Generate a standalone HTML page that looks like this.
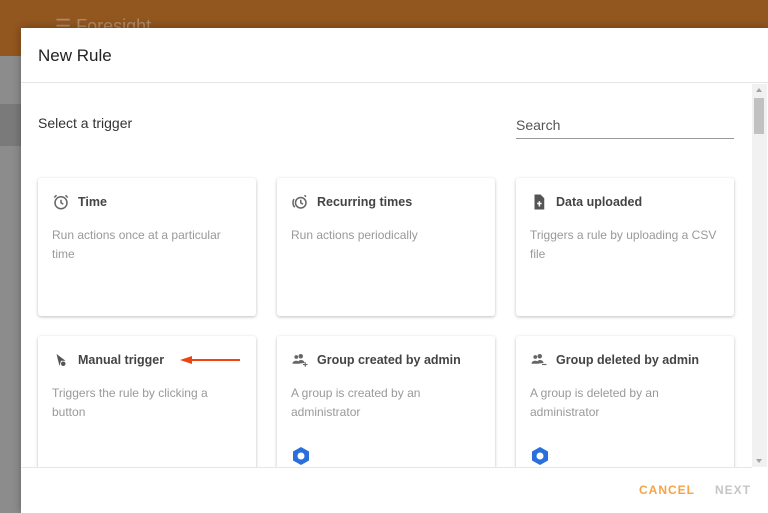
<!DOCTYPE html>
<html><head><style>
*{box-sizing:border-box;margin:0;padding:0}
body{width:768px;height:513px;overflow:hidden;font-family:"Liberation Sans",sans-serif;background:#8c8c8c;position:relative}
.top{position:absolute;left:0;top:0;width:768px;height:56px;background:#92561f}
.top .t{position:absolute;left:55px;top:16px;color:#b08a66;font-size:18px}
.side{position:absolute;left:0;top:104px;width:21px;height:42px;background:#7a7a7a}
.dlg{position:absolute;left:21px;top:28px;width:747px;height:485px;background:#fff;box-shadow:0 0 8px rgba(0,0,0,.3)}
.hd{height:55px;border-bottom:1px solid #e6e6e6;padding:18px 0 0 17px;font-size:17px;color:#222}
.sb{position:absolute;left:731px;top:56px;width:15px;height:383px;background:#f1f1f1}
.sb .th{position:absolute;left:2px;top:14px;width:10px;height:36px;background:#c1c1c1}
.sb .u{position:absolute;left:4px;top:4px;border:3.5px solid transparent;border-bottom:4px solid #a3a3a3;border-top:0}
.sb .d{position:absolute;left:4px;bottom:4px;border:3.5px solid transparent;border-top:4px solid #a3a3a3;border-bottom:0}
.sel{position:absolute;left:17px;top:87px;font-size:14px;color:#333}
.srch{position:absolute;left:495px;top:89px;width:218px;height:22px;border-bottom:1px solid #999;font-size:14px;color:#555}
.card{position:absolute;width:218px;height:138px;background:#fff;border-radius:3px;box-shadow:0 1px 3px rgba(0,0,0,.25)}
.card .h{position:absolute;left:14px;top:15px;font-size:12.5px;font-weight:bold;color:#444;display:flex;align-items:center}
.card .h svg{margin-right:8px}
.card .p{position:absolute;left:14px;top:48px;width:190px;font-size:12px;line-height:19px;color:#999}
.ft{position:absolute;left:0;top:439px;width:731px;height:46px;border-top:1px solid #e6e6e6;background:#fff}
.btn{position:absolute;top:15px;font-size:12px;font-weight:bold;letter-spacing:1px}
</style></head><body>
<div class="top"><div class="t">☰ Foresight</div></div>
<div class="side"></div>
<div class="dlg">
<div class="hd">New Rule</div>
<div class="sel">Select a trigger</div>
<div class="srch">Search</div>
<div class="card" style="left:17px;top:150px"><div class="h"><svg width="18" height="18" viewBox="0 0 24 24" fill="none" stroke="#666" stroke-width="2"><circle cx="12" cy="13" r="8"/><path d="M12 9v4l3 2M3 6l3-3M21 6l-3-3"/></svg>Time</div><div class="p">Run actions once at a particular time</div></div>
<div class="card" style="left:256px;top:150px"><div class="h"><svg width="18" height="18" viewBox="0 0 24 24" fill="none" stroke="#666" stroke-width="2"><circle cx="13" cy="13" r="7"/><path d="M13 9v4l3 2M4 8a9 9 0 0 0 1 11M20 5l-2-2"/></svg>Recurring times</div><div class="p">Run actions periodically</div></div>
<div class="card" style="left:495px;top:150px"><div class="h"><svg width="18" height="18" viewBox="0 0 24 24"><path d="M6 2h8l5 5v15H6z" fill="#555"/><path d="M12.5 11v7M9.5 14h6" stroke="#fff" stroke-width="2"/></svg>Data uploaded</div><div class="p">Triggers a rule by uploading a CSV file</div></div>
<div class="card" style="left:17px;top:308px"><div class="h"><svg width="18" height="18" viewBox="0 0 24 24"><path d="M6 4l12 9h-6l-2 7z" fill="#555"/><circle cx="15" cy="17" r="3" fill="#555"/></svg>Manual trigger<svg style="margin-left:16px" width="60" height="10" viewBox="0 0 60 10"><path d="M10 5h50" stroke="#e41" stroke-width="2"/><path d="M0 5l12-4v8z" fill="#e41"/></svg></div><div class="p">Triggers the rule by clicking a button</div></div>
<div class="card" style="left:256px;top:308px"><div class="h"><svg width="18" height="18" viewBox="0 0 24 24" fill="#666"><circle cx="7" cy="8" r="2.5"/><circle cx="13" cy="7" r="3"/><path d="M2 17c0-3 3-4 5-4s5 1 5 4zM9 17c0-3 2-5 4-5s5 1 5 4"/><path d="M19 15v6M16 18h6" stroke="#666" stroke-width="1.5"/></svg>Group created by admin</div><div class="p">A group is created by an administrator</div><svg style="position:absolute;left:14px;top:110px" width="20" height="20" viewBox="0 0 20 20"><path d="M10 1l8 4.5v9L10 19l-8-4.5v-9z" fill="#2a6fdb"/><circle cx="10" cy="10" r="3.5" fill="#fff"/></svg></div>
<div class="card" style="left:495px;top:308px"><div class="h"><svg width="18" height="18" viewBox="0 0 24 24" fill="#666"><circle cx="7" cy="8" r="2.5"/><circle cx="13" cy="7" r="3"/><path d="M2 17c0-3 3-4 5-4s5 1 5 4zM9 17c0-3 2-5 4-5s5 1 5 4"/><path d="M16 18h6" stroke="#666" stroke-width="1.5"/></svg>Group deleted by admin</div><div class="p">A group is deleted by an administrator</div><svg style="position:absolute;left:14px;top:110px" width="20" height="20" viewBox="0 0 20 20"><path d="M10 1l8 4.5v9L10 19l-8-4.5v-9z" fill="#2a6fdb"/><circle cx="10" cy="10" r="3.5" fill="#fff"/></svg></div>
<div class="sb"><div class="u"></div><div class="th"></div><div class="d"></div></div>
<div class="ft"><span class="btn" style="left:618px;color:#f7a343">CANCEL</span><span class="btn" style="left:694px;color:#c6c6c6">NEXT</span></div>
</div>
</body></html>
